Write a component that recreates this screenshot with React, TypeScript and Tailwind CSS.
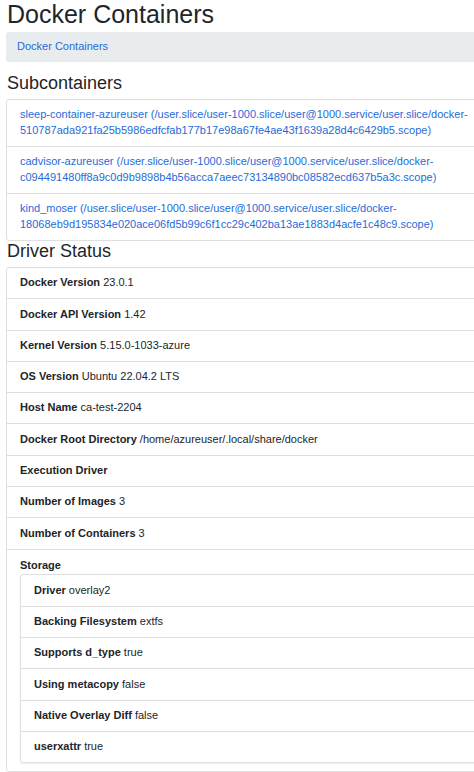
import React from 'react';

type Row = { label: string; value?: string };

const subcontainers = [
    {
        name: 'sleep-container-azureuser',
        path: '/user.slice/user-1000.slice/user@1000.service/user.slice/docker-510787ada921fa25b5986edfcfab177b17e98a67fe4ae43f1639a28d4c6429b5.scope',
    },
    {
        name: 'cadvisor-azureuser',
        path: '/user.slice/user-1000.slice/user@1000.service/user.slice/docker-c094491480ff8a9c0d9b9898b4b56acca7aeec73134890bc08582ecd637b5a3c.scope',
    },
    {
        name: 'kind_moser',
        path: '/user.slice/user-1000.slice/user@1000.service/user.slice/docker-18068eb9d195834e020ace06fd5b99c6f1cc29c402ba13ae1883d4acfe1c48c9.scope',
    },
];

const driverStatus: Row[] = [
    { label: 'Docker Version', value: '23.0.1' },
    { label: 'Docker API Version', value: '1.42' },
    { label: 'Kernel Version', value: '5.15.0-1033-azure' },
    { label: 'OS Version', value: 'Ubuntu 22.04.2 LTS' },
    { label: 'Host Name', value: 'ca-test-2204' },
    { label: 'Docker Root Directory', value: '/home/azureuser/.local/share/docker' },
    { label: 'Execution Driver' },
    { label: 'Number of Images', value: '3' },
    { label: 'Number of Containers', value: '3' },
];

const storage: Row[] = [
    { label: 'Driver', value: 'overlay2' },
    { label: 'Backing Filesystem', value: 'extfs' },
    { label: 'Supports d_type', value: 'true' },
    { label: 'Using metacopy', value: 'false' },
    { label: 'Native Overlay Diff', value: 'false' },
    { label: 'userxattr', value: 'true' },
];

const itemClass = 'px-[13px] py-[7.3px] border-b border-[#dfdfdf] last:border-b-0';

const StatusRow: React.FC<{ row: Row }> = ({ row }) => (
    <li className={itemClass}>
        <span className="font-bold">{row.label}</span>
        {row.value ? ` ${row.value}` : ''}
    </li>
);

export default function App() {
    return (
        <div className="overflow-hidden bg-white text-[#212529] font-['Helvetica_Neue','Liberation_Sans',Arial,sans-serif]">
            <div className="w-[500px] pl-[6px] text-[11px] leading-[15.7px]">
                <h1 className="text-[25px] leading-[28px] font-normal pl-px">Docker Containers</h1>

                <nav className="mt-[4px] bg-[#e9ecef] rounded-[3px] px-[11px] h-[30px] flex items-center">
                    <a className="text-[#1f6bd8]">Docker Containers</a>
                </nav>

                <h2 className="mt-[12px] text-[18px] leading-[18px] font-normal pl-px">Subcontainers</h2>
                <ul className="mt-[7px] border border-[#dfdfdf] rounded-[3px]">
                    {subcontainers.map(c => (
                        <li key={c.name} className={itemClass + ' pr-[30px]'}>
                            <a className="text-[#1f6bd8] break-words">
                                {c.name} ({c.path})
                            </a>
                        </li>
                    ))}
                </ul>

                <h2 className="mt-[1px] text-[18px] leading-[18px] font-normal pl-px">Driver Status</h2>
                <ul className="mt-[7px] border border-[#dfdfdf] rounded-[3px]">
                    {driverStatus.map(row => (
                        <StatusRow key={row.label} row={row} />
                    ))}
                    <li className="px-[13px] pt-[8px] pb-[8px]">
                        <span className="font-bold">Storage</span>
                        <ul className="mt-[1px] border border-[#dfdfdf] rounded-[3px] shadow-[0_1px_2px_rgba(0,0,0,0.08)]">
                            {storage.map(row => (
                                <StatusRow key={row.label} row={row} />
                            ))}
                        </ul>
                    </li>
                </ul>
            </div>
        </div>
    );
}
